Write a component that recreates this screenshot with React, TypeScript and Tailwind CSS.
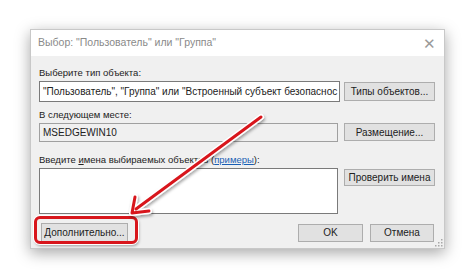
import React from "react";

const font = { fontFamily: '"Liberation Sans", Arial, sans-serif' };

function WinButton({ label, className = "" }: { label: string; className?: string }) {
  return (
    <div
      className={
        "shrink-0 flex items-center justify-center whitespace-nowrap border border-[#adadad] bg-[#e1e1e1] text-[10px] text-[#222] " +
        className
      }
    >
      {label}
    </div>
  );
}

function Field({ text, className = "" }: { text?: string; className?: string }) {
  return (
    <div
      className={
        "shrink-0 flex items-center border border-[#7a7a7a] px-[3px] text-[10px] text-[#222] whitespace-nowrap overflow-hidden " +
        className
      }
    >
      {text}
    </div>
  );
}

function Arrow() {
  return (
    <svg className="absolute left-0 top-0" width="474" height="278" viewBox="0 0 474 278">
      <defs>
        <filter id="sh" x="-20%" y="-20%" width="140%" height="140%">
          <feDropShadow dx="1" dy="2" stdDeviation="1.5" floodColor="#000" floodOpacity="0.35" />
        </filter>
      </defs>
      <g filter="url(#sh)">
        <g stroke="#fff" strokeWidth="6" strokeLinecap="round" strokeLinejoin="round" fill="none">
          <line x1="261" y1="117" x2="136" y2="209" />
          <polyline points="135,197 132,213 149,211" />
        </g>
        <g stroke="#d8161c" strokeWidth="3" strokeLinecap="round" strokeLinejoin="round" fill="none">
          <line x1="261" y1="117" x2="136" y2="209" />
          <polyline points="135,197 132,213 149,211" />
        </g>
      </g>
    </svg>
  );
}

function Grip() {
  return (
    <svg width="8" height="8" viewBox="0 0 8 8" className="absolute right-[1px] bottom-[1px]">
      <g fill="#a8a8a8">
        <rect x="6" y="0" width="1.5" height="1.5" />
        <rect x="3" y="3" width="1.5" height="1.5" />
        <rect x="6" y="3" width="1.5" height="1.5" />
        <rect x="0" y="6" width="1.5" height="1.5" />
        <rect x="3" y="6" width="1.5" height="1.5" />
        <rect x="6" y="6" width="1.5" height="1.5" />
      </g>
    </svg>
  );
}

export default function App() {
  return (
    <div className="relative w-[474px] h-[278px] bg-white overflow-hidden" style={font}>
      <div className="pt-[29px] pl-[30px]">
        <div className="relative w-[415px] h-[220px] border border-[#c8c8c8] bg-[#f0f0f0] shadow-[0_4px_14px_rgba(0,0,0,0.35)] flex flex-col">
          <div className="h-[26px] bg-white flex items-center justify-between pl-[7px] pr-[8px] text-[10.5px] text-[#8a8a8a]">
            <span className="whitespace-nowrap">Выбор: "Пользователь" или "Группа"</span>
            <span className="text-[15px] font-light text-[#9a9a9a] leading-none">✕</span>
          </div>
          <div className="flex flex-col pl-[8px] pr-[10px] pt-[9px] text-[9.5px] text-[#222]">
            <div className="leading-[15px] whitespace-nowrap">Выберите тип объекта:</div>
            <div className="flex gap-[4px] mt-[1px]">
              <Field text={'"Пользователь", "Группа" или "Встроенный субъект безопаснос'} className="w-[301px] h-[21px] bg-white" />
              <WinButton label="Типы объектов..." className="w-[91px] h-[19px] mt-[1px]" />
            </div>
            <div className="leading-[15px] mt-[5px] whitespace-nowrap">В следующем месте:</div>
            <div className="flex gap-[6px] mt-[1px]">
              <Field text="MSEDGEWIN10" className="w-[299px] h-[19px] bg-[#f0f0f0] border-[#a0a0a0]" />
              <WinButton label="Размещение..." className="w-[91px] h-[18px]" />
            </div>
            <div className="leading-[15px] mt-[10px] whitespace-nowrap">
              Введите <span className="underline">и</span>мена выбираемых объектов (
              <span className="text-[#1a5fb4] underline">примеры</span>):
            </div>
            <div className="flex gap-[6px] mt-[1px]">
              <Field className="w-[299px] h-[46px] bg-white" />
              <WinButton label="Проверить имена" className="w-[91px] h-[17px] mt-[1px]" />
            </div>
            <div className="flex items-center justify-between mt-[9px]">
              <WinButton label="Дополнительно..." className="w-[87px] h-[19px] ml-[2px]" />
              <div className="flex gap-[7px]">
                <WinButton label="OK" className="w-[65px] h-[18px]" />
                <WinButton label="Отмена" className="w-[64px] h-[18px]" />
              </div>
            </div>
          </div>
          <Grip />
        </div>
      </div>
      <div className="absolute left-[34px] top-[216px] w-[104px] h-[28px] rounded-[6px] border-[3px] border-[#d8161c] shadow-[0_0_0_1px_#fff,1px_2px_3px_rgba(0,0,0,0.35)]" />
      <Arrow />
    </div>
  );
}
